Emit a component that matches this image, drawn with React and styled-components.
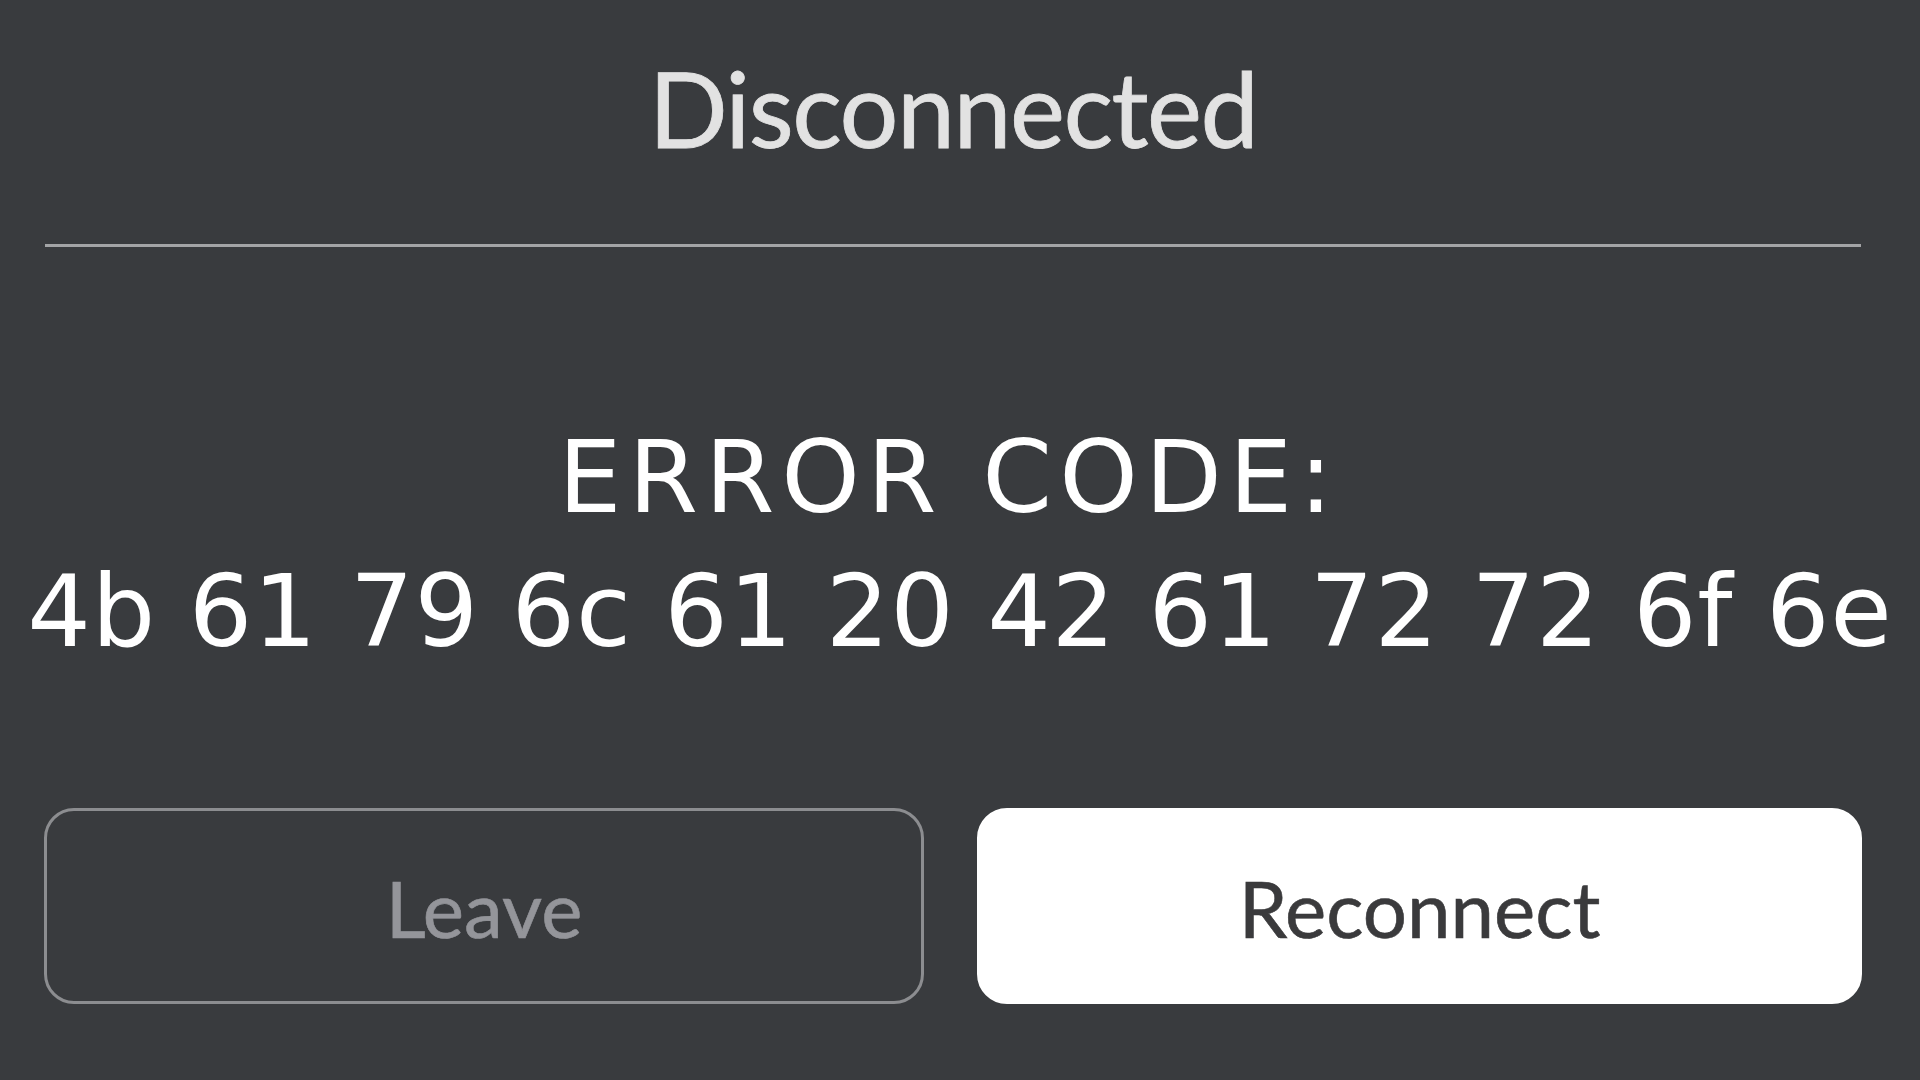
import React from 'react';
import styled, { createGlobalStyle } from 'styled-components';

const GlobalStyle = createGlobalStyle`
  html, body {
    margin: 0;
    padding: 0;
    background: #393b3e;
  }
  * {
    box-sizing: border-box;
  }
`;

const Screen = styled.div`
  width: 1920px;
  height: 1080px;
  padding-right: 14px;
  background: #393b3e;
  display: flex;
  flex-direction: column;
  align-items: center;
  overflow: hidden;
`;

const Title = styled.h1`
  margin: 48px 0 0;
  height: 150px;
  font-family: Lato, 'Liberation Sans', sans-serif;
  font-weight: 400;
  font-size: 104px;
  line-height: 120px;
  letter-spacing: -1.5px;
  color: #e2e2e2;
  -webkit-text-stroke: 0.8px #e2e2e2;
`;

const Divider = styled.hr`
  width: 1816px;
  margin: 46px 0 0;
  border: none;
  height: 3px;
  background: #a3a4a6;
`;

const Message = styled.div`
  margin-top: 164px;
  display: flex;
  flex-direction: column;
  align-items: center;
  font-family: 'DejaVu Sans', 'Liberation Sans', sans-serif;
  font-weight: 400;
  color: #ffffff;
  white-space: nowrap;
`;

const Line = styled.div`
  font-size: 100px;
  line-height: 134px;
  letter-spacing: ${(props) => props.spacing}px;
  margin-left: ${(props) => props.shift || 0}px;
`;

const Actions = styled.div`
  width: 1818px;
  margin-top: 129px;
  display: grid;
  grid-template-columns: 880px 885px;
  justify-content: space-between;
`;

const Button = styled.button`
  height: 196px;
  border-radius: 30px;
  display: flex;
  align-items: center;
  justify-content: center;
  padding-top: 4px;
  font-family: Lato, 'Liberation Sans', sans-serif;
  font-size: 78px;
  cursor: pointer;
  border: 3px solid ${(props) => (props.primary ? '#ffffff' : '#8c8d90')};
  background: ${(props) => (props.primary ? '#ffffff' : 'transparent')};
  color: ${(props) => (props.primary ? '#3a3a3c' : '#94959a')};
  -webkit-text-stroke: 0.6px ${(props) => (props.primary ? '#3a3a3c' : '#94959a')};
  :focus {
    outline: none;
  }
`;

const App = () => (
  <Screen>
    <GlobalStyle />
    <Title>Disconnected</Title>
    <Divider />
    <Message>
      <Line spacing={7} shift={-8}>ERROR CODE:</Line>
      <Line spacing={0.8} shift={14}>4b 61 79 6c 61 20 42 61 72 72 6f 6e</Line>
    </Message>
    <Actions>
      <Button>Leave</Button>
      <Button primary>Reconnect</Button>
    </Actions>
  </Screen>
);

export default App;
